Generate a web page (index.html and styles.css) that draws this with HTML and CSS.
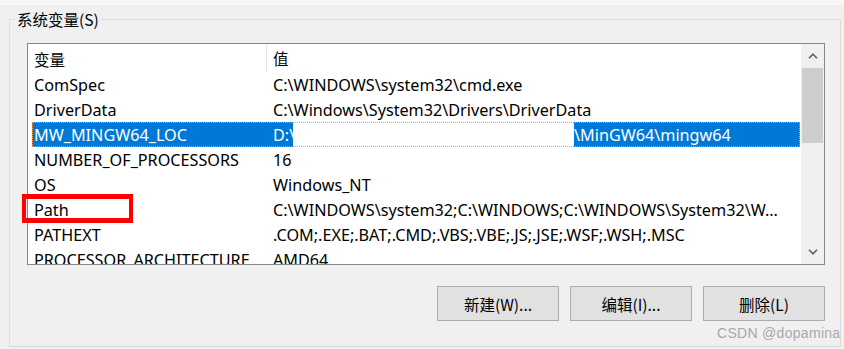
FILE: index.html
```html
<!DOCTYPE html>
<html lang="zh-CN">
<head>
    <meta charset="UTF-8">
    <meta name="viewport" content="width=device-width, initial-scale=1.0">
    <title>系统变量</title>
    <link rel="stylesheet" href="styles.css">
</head>
<body>

    <div class="topbar"></div>

    <fieldset class="group">
        <legend>系统变量(S)</legend>

        <div class="listbox">
            <div class="list">
                <div class="list-head">
                    <div class="col-name">变量</div>
                    <div class="col-value">值</div>
                </div>
                <div class="row"><span class="name">ComSpec</span><span class="value">C:\WINDOWS\system32\cmd.exe</span></div>
                <div class="row"><span class="name">DriverData</span><span class="value">C:\Windows\System32\Drivers\DriverData</span></div>
                <div class="row selected">
                    <span class="name">MW_MINGW64_LOC</span>
                    <span class="value"><span class="drive">D:\</span><span class="redact"></span><span>\MinGW64\mingw64</span></span>
                </div>
                <div class="row"><span class="name">NUMBER_OF_PROCESSORS</span><span class="value">16</span></div>
                <div class="row"><span class="name">OS</span><span class="value">Windows_NT</span></div>
                <div class="row"><span class="name">Path</span><span class="value">C:\WINDOWS\system32;C:\WINDOWS;C:\WINDOWS\System32\W...</span></div>
                <div class="row"><span class="name">PATHEXT</span><span class="value">.COM;.EXE;.BAT;.CMD;.VBS;.VBE;.JS;.JSE;.WSF;.WSH;.MSC</span></div>
                <div class="row"><span class="name">PROCESSOR_ARCHITECTURE</span><span class="value">AMD64</span></div>
            </div>

            <div class="scrollbar">
                <div class="arrow">
                    <svg width="10" height="6" viewBox="0 0 10 6"><path d="M1 5.2 L5 1.2 L9 5.2" fill="none" stroke="#606060" stroke-width="1.6"/></svg>
                </div>
                <div class="thumb"></div>
                <div class="track"></div>
                <div class="arrow">
                    <svg width="10" height="6" viewBox="0 0 10 6"><path d="M1 0.8 L5 4.8 L9 0.8" fill="none" stroke="#606060" stroke-width="1.6"/></svg>
                </div>
            </div>
        </div>

        <div class="buttons">
            <button class="btn">新建(W)...</button>
            <button class="btn">编辑(I)...</button>
            <button class="btn">删除(L)</button>
        </div>
    </fieldset>

    <div class="mark-box"></div>
    <div class="watermark">CSDN @dopamina</div>

</body>
</html>
```

FILE: styles.css
```css
body {
    margin: 0;
    width: 844px;
    height: 349px;
    background-color: #f0f0f0;
    color: #000;
    font-family: "Noto Sans", "Noto Sans CJK SC", sans-serif;
    position: relative;
    overflow: hidden;
}

.topbar {
    height: 5px;
    background-color: #f7f7f7;
}

.group {
    box-sizing: border-box;
    width: 832px;
    height: 338px;
    margin: 4px 0 0 9px;
    padding: 14px 15px 0 17px;
    border: 1px solid #dcdcdc;
}

.group legend {
    margin-left: -12px;
    padding: 0 2px;
    font-family: "Noto Sans CJK SC", sans-serif;
    font-size: 15.5px;
    line-height: 20px;
    color: #000;
}

.listbox {
    display: flex;
    height: 222px;
    box-sizing: border-box;
    border: 1px solid #828790;
    background-color: #fff;
}

.list {
    flex: 1;
    overflow: hidden;
    font-size: 16.2px;
}

.list-head {
    display: flex;
    height: 28px;
    align-items: center;
}

.list-head .col-name {
    width: 232px;
    height: 27px;
    margin-top: 1px;
    padding-left: 6px;
    border-right: 1px solid #e5e5e5;
    display: flex;
    align-items: center;
    font-family: "Noto Sans CJK SC", sans-serif;
    font-size: 15.5px;
}

.list-head .col-value {
    padding-left: 6px;
    font-family: "Noto Sans CJK SC", sans-serif;
    font-size: 15.5px;
}

.row {
    display: flex;
    align-items: center;
    height: 25px;
    margin: 0 1px 0 4px;
    white-space: nowrap;
}

.row .name {
    width: 237px;
    padding-left: 2px;
    overflow: hidden;
}

.row .value {
    display: flex;
    height: 100%;
    align-items: center;
    padding-left: 2px;
}

.row.selected {
    background-color: #0078d7;
    color: #fff;
    outline: 1px dotted #f0a050;
    outline-offset: -1px;
}

.row .drive {
    width: 20px;
    overflow: hidden;
}

.row .redact {
    width: 281px;
    height: 100%;
    background-color: #fff;
}

.scrollbar {
    width: 23px;
    display: flex;
    flex-direction: column;
    background-color: #f0f0f0;
}

.scrollbar .arrow {
    height: 24px;
    display: flex;
    align-items: center;
    justify-content: center;
}

.scrollbar .thumb {
    height: 75px;
    margin: 0 1px;
    background-color: #cdcdcd;
}

.scrollbar .track {
    flex: 1;
}

.buttons {
    display: flex;
    justify-content: flex-end;
    gap: 11px;
    margin-top: 21px;
}

.btn {
    width: 122px;
    height: 35px;
    border: 1px solid #adadad;
    background-color: #e1e1e1;
    color: #000;
    font-family: "Noto Sans CJK SC", sans-serif;
    font-size: 15.5px;
    padding: 0;
}

.mark-box {
    position: absolute;
    left: 22px;
    top: 194px;
    width: 103px;
    height: 19px;
    border: 5px solid #f00;
    border-width: 5px 4px;
}

.watermark {
    position: absolute;
    left: 717px;
    top: 325px;
    font-family: "Liberation Sans", sans-serif;
    font-size: 14px;
    color: #a8a8a8;
    letter-spacing: 0.3px;
}
```
